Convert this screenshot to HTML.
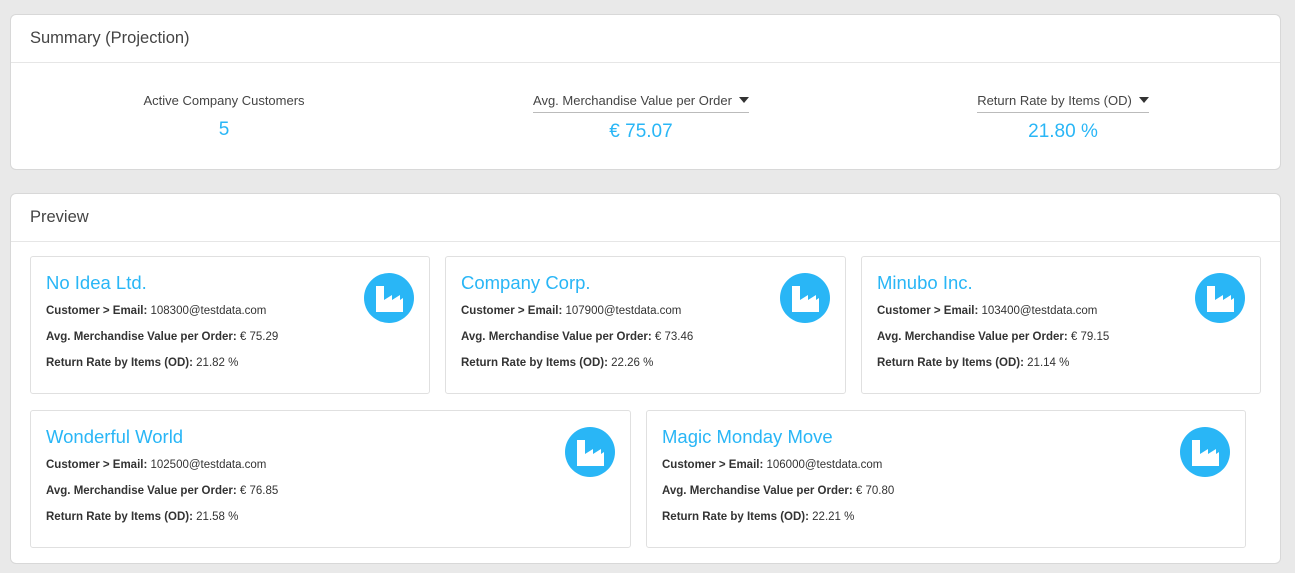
<!DOCTYPE html>
<html><head><style>
body{margin:0;width:1295px;height:573px;background:#e9e9e9;font-family:"Liberation Sans",sans-serif;color:#333;position:relative;overflow:hidden}
.panel{position:absolute;left:10px;width:1271px;background:#fff;border:1px solid #d8d8d8;border-radius:6px;box-sizing:border-box}
.ph{height:47px;border-bottom:1px solid #e6e6e6;padding-left:19px;line-height:47px;font-size:16.5px;color:#444}
.col{position:absolute;text-align:center;top:78px}
.lbl{font-size:13px;color:#444}
.dd{display:inline-block;border-bottom:1px solid #bbb;padding:0 0 4px 0}
.dd:after{content:"";display:inline-block;border:5px solid transparent;border-top:6px solid #333;border-bottom:0;margin-left:7px;vertical-align:2px}
.val{color:#29b6f6;font-size:19px;margin-top:8px}
.card{position:absolute;height:138px;border:1px solid #e0e0e0;border-radius:3px;box-sizing:border-box;background:#fff}
.card h3{margin:0;position:absolute;left:15px;top:15px;font-weight:normal;color:#29b6f6;font-size:18.5px}
.card p{margin:0;position:absolute;left:15px;font-size:11.5px;color:#333}
.card b{font-weight:bold}
.ic{position:absolute;top:16px;width:50px;height:50px}
</style></head><body>
<div class="panel" style="top:14px;height:156px">
<div class="ph">Summary (Projection)</div>
<div class="col" style="left:73px;width:280px"><div class="lbl" style="padding-bottom:5px">Active Company Customers</div><div class="val" style="margin-top:6px">5</div></div>
<div class="col" style="left:490px;width:280px"><div class="lbl"><span class="dd">Avg. Merchandise Value per Order</span></div><div class="val">€ 75.07</div></div>
<div class="col" style="left:912px;width:280px"><div class="lbl"><span class="dd">Return Rate by Items (OD)</span></div><div class="val">21.80 %</div></div>
</div>
<div class="panel" style="top:193px;height:371px">
<div class="ph">Preview</div>
</div>
<svg width="0" height="0" style="position:absolute"><defs><symbol id="f" viewBox="0 0 50 50"><circle cx="25" cy="25" r="25" fill="#29b6f6"/><path d="M12 13h8v14l8-5v5l8-5v5l3-2v14H12z" fill="#fff"/></symbol></defs></svg>

<div class="card" style="left:30px;top:256px;width:400px"><h3>No Idea Ltd.</h3><svg class="ic" style="left:333px"><use href="#f"/></svg>
<p style="top:48px"><b>Customer &gt; Email:</b> 108300@testdata.com</p><p style="top:74px"><b>Avg. Merchandise Value per Order:</b> € 75.29</p><p style="top:100px"><b>Return Rate by Items (OD):</b> 21.82 %</p></div>
<div class="card" style="left:445px;top:256px;width:401px"><h3>Company Corp.</h3><svg class="ic" style="left:334px"><use href="#f"/></svg>
<p style="top:48px"><b>Customer &gt; Email:</b> 107900@testdata.com</p><p style="top:74px"><b>Avg. Merchandise Value per Order:</b> € 73.46</p><p style="top:100px"><b>Return Rate by Items (OD):</b> 22.26 %</p></div>
<div class="card" style="left:861px;top:256px;width:400px"><h3>Minubo Inc.</h3><svg class="ic" style="left:333px"><use href="#f"/></svg>
<p style="top:48px"><b>Customer &gt; Email:</b> 103400@testdata.com</p><p style="top:74px"><b>Avg. Merchandise Value per Order:</b> € 79.15</p><p style="top:100px"><b>Return Rate by Items (OD):</b> 21.14 %</p></div>
<div class="card" style="left:30px;top:410px;width:601px"><h3>Wonderful World</h3><svg class="ic" style="left:534px"><use href="#f"/></svg>
<p style="top:48px"><b>Customer &gt; Email:</b> 102500@testdata.com</p><p style="top:74px"><b>Avg. Merchandise Value per Order:</b> € 76.85</p><p style="top:100px"><b>Return Rate by Items (OD):</b> 21.58 %</p></div>
<div class="card" style="left:646px;top:410px;width:600px"><h3>Magic Monday Move</h3><svg class="ic" style="left:533px"><use href="#f"/></svg>
<p style="top:48px"><b>Customer &gt; Email:</b> 106000@testdata.com</p><p style="top:74px"><b>Avg. Merchandise Value per Order:</b> € 70.80</p><p style="top:100px"><b>Return Rate by Items (OD):</b> 22.21 %</p></div>
</body></html>
